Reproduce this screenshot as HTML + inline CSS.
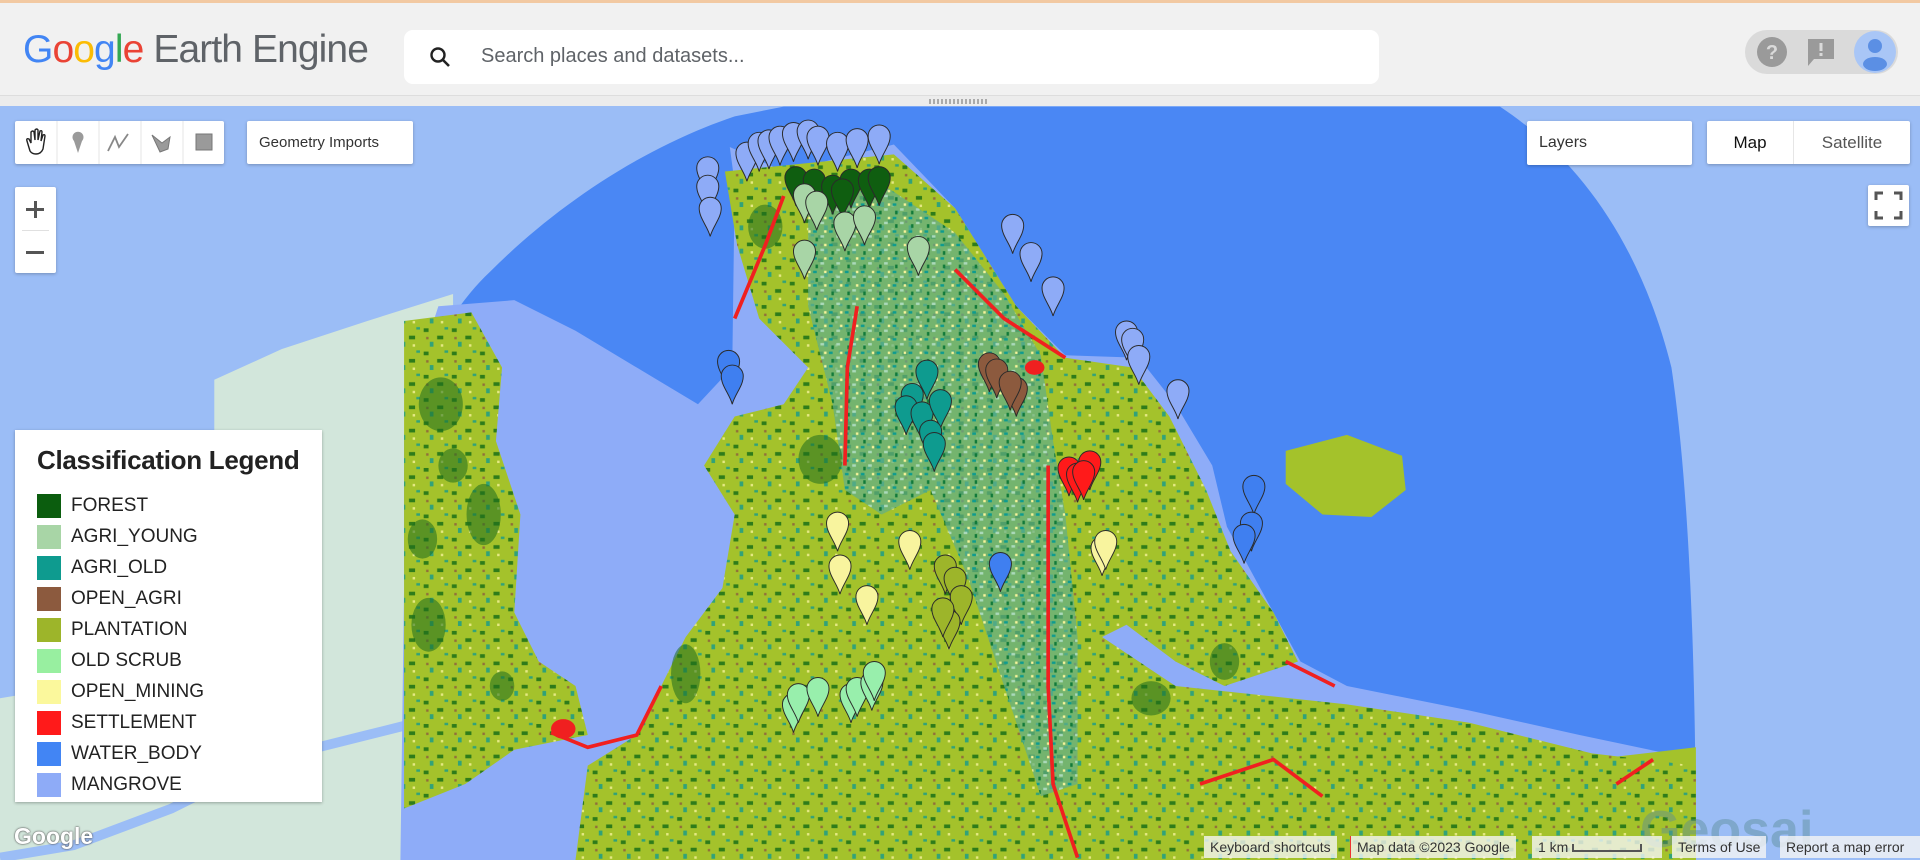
<!DOCTYPE html>
<html><head><meta charset="utf-8"><style>
*{margin:0;padding:0;box-sizing:border-box}
body{width:1920px;height:860px;overflow:hidden;font-family:"Liberation Sans",Arial,sans-serif;background:#9bbdf6;position:relative}
.hdr{position:absolute;left:0;top:0;width:1920px;height:95px;background:#f1f1f1;border-top:3px solid #f2c9a2}
.strip{position:absolute;left:0;top:95px;width:1920px;height:11px;background:#ececec;border-top:1px solid #ddd}
.logo{position:absolute;left:23px;top:25px;font-size:39px;letter-spacing:-0.9px;color:#5f6368;white-space:nowrap}
.search{position:absolute;left:404px;top:27px;width:975px;height:54px;background:#fff;border-radius:9px}
.search span{position:absolute;left:77px;top:15px;font-size:20px;color:#5f6368}
.pill{position:absolute;left:1745px;top:27px;width:153px;height:44px;border-radius:22px;background:#dadada}
.box{position:absolute;background:#fff;border-radius:2px;box-shadow:0 1px 3px rgba(0,0,0,.25)}
.lbl{font-size:16px;color:#333}
.legend{position:absolute;left:15px;top:430px;width:307px;height:372px;background:#fff;box-shadow:0 1px 3px rgba(0,0,0,.3)}
.legend h3{position:absolute;left:22px;top:15px;font-size:26px;font-weight:bold;color:#222;letter-spacing:-0.3px}
.row{position:absolute;left:22px;height:24px;font-size:19px;color:#222;line-height:24px}
.row i{display:inline-block;width:24px;height:24px;vertical-align:top;margin-right:10px}
.foot{position:absolute;top:836px;height:22px;background:rgba(245,245,245,.8);font-size:14px;color:#333;line-height:22px;padding:0 6px}
</style></head><body>
<div class="hdr">
 <div class="logo"><span style="color:#4285f4">G</span><span style="color:#ea4335">o</span><span style="color:#fbbc05">o</span><span style="color:#4285f4">g</span><span style="color:#34a853">l</span><span style="color:#ea4335">e</span> Earth Engine</div>
 <div class="search"><svg style="position:absolute;left:24px;top:15px" width="24" height="24" viewBox="0 0 24 24"><circle cx="10" cy="10" r="6.5" fill="none" stroke="#222" stroke-width="2.4"/><path d="M14.5 14.5L21 21" stroke="#222" stroke-width="2.6"/></svg><span>Search places and datasets...</span></div>
 <div class="pill">
  <svg style="position:absolute;left:12px;top:7px" width="30" height="30" viewBox="0 0 30 30"><circle cx="15" cy="15" r="15" fill="#9a9a9a"/><text x="15" y="22" font-size="20" font-weight="bold" fill="#dadada" text-anchor="middle" font-family="Liberation Sans">?</text></svg>
  <svg style="position:absolute;left:61px;top:7px" width="30" height="30" viewBox="0 0 30 30"><path d="M2 2H28V22H8L2 29Z" fill="#9a9a9a"/><rect x="13.5" y="6" width="3" height="8" fill="#dadada"/><rect x="13.5" y="16" width="3" height="3" fill="#dadada"/></svg>
  <svg style="position:absolute;left:109px;top:1px" width="42" height="42" viewBox="0 0 42 42"><circle cx="21" cy="21" r="21" fill="#a9c6f6"/><circle cx="21" cy="15" r="7" fill="#5b8fe4"/><ellipse cx="21" cy="33" rx="12" ry="7" fill="#5b8fe4"/></svg>
 </div>
</div>
<div class="strip"><div style="position:absolute;left:929px;top:3px;width:60px;height:5px;background:repeating-linear-gradient(90deg,#aaa 0 2px,transparent 2px 4px)"></div></div>

<svg style="position:absolute;left:0;top:0" width="1920" height="860" viewBox="0 0 1568 702" preserveAspectRatio="none">
<defs>
<path id="pin" d="M9,32 C7,24 0,17 0,9 A9,9 0 0 1 18,9 C18,17 11,24 9,32 Z" stroke="#2a2a2a" stroke-width="0.8"/>
<pattern id="tex" width="23" height="19" patternUnits="userSpaceOnUse">
<rect x="1" y="2" width="4" height="3" fill="#116a16"/><rect x="12" y="8" width="5" height="3" fill="#116a16"/><rect x="6" y="13" width="3" height="4" fill="#149a8c"/><rect x="18" y="1" width="3" height="2" fill="#149a8c"/><rect x="15" y="15" width="2" height="2" fill="#f6f39a"/><rect x="3" y="9" width="2" height="2" fill="#8c5a3e"/>
</pattern>
<pattern id="tex2" width="13" height="11" patternUnits="userSpaceOnUse">
<rect x="1" y="1" width="3" height="2" fill="#0e9b8f"/><rect x="7" y="5" width="3" height="2" fill="#aad9ba"/><rect x="3" y="7" width="2" height="3" fill="#117a3a"/><rect x="10" y="1" width="2" height="2" fill="#f6f39a"/>
</pattern>
</defs>
<rect x="0" y="87" width="1568" height="615" fill="#9bbdf6"/>
<path d="M175,310 L230,285 L300,262 L370,240 L370,702 L0,702 L0,570 L60,560 L130,555 L175,520 Z" fill="#d2e6db"/>
<path d="M0,700 L60,690 L140,660 L220,620 L300,600 L340,590" fill="none" stroke="#9bbdf6" stroke-width="8"/>
<path d="M330,360 C340,300 370,250 400,222 C450,172 520,122 600,95 L640,87 L1225,87 C1290,130 1340,200 1365,300 C1380,400 1385,550 1385,702 L330,702 Z" fill="#4a87f4"/>
<path d="M327,702 L332,330 L358,250 L420,245 L470,270 L520,300 L570,330 L598,300 L600,150 L596,120 L640,140 L730,118 L780,170 L830,250 L870,290 L930,292 L960,330 L990,380 L1002,430 L1040,500 L1062,540 L1100,560 L1200,580 L1290,600 L1385,620 L1385,702 Z" fill="#8eacf8"/>
<g id="land" fill="#a4c22b">
<path d="M330,262 L385,255 L410,300 L405,360 L425,420 L420,500 L440,540 L470,560 L480,600 L420,612 L380,640 L330,660 Z"/>
<path d="M592,140 L730,126 L780,170 L830,250 L870,292 L925,300 L955,340 L985,400 L1005,450 L1040,500 L1060,540 L1000,560 L960,540 L920,510 L900,520 L960,560 L1100,575 L1200,590 L1300,615 L1385,625 L1385,702 L470,702 L480,625 L520,600 L540,560 L560,520 L590,480 L600,420 L575,380 L600,340 L640,330 L660,300 L620,260 L602,200 Z"/>
<path d="M1050,368 L1100,355 L1145,372 L1148,400 L1120,422 L1080,420 L1050,395 Z"/>
<path d="M1300,620 L1385,610 L1385,702 L1310,702 Z"/>
</g>
<g fill="url(#tex)" opacity="0.8">
<path d="M330,262 L385,255 L410,300 L405,360 L425,420 L420,500 L440,540 L470,560 L480,600 L420,612 L380,640 L330,660 Z"/>
<path d="M592,140 L730,126 L780,170 L830,250 L870,292 L925,300 L955,340 L985,400 L1005,450 L1040,500 L1060,540 L1000,560 L960,540 L920,510 L900,520 L960,560 L1100,575 L1200,590 L1300,615 L1385,625 L1385,702 L470,702 L480,625 L520,600 L540,560 L560,520 L590,480 L600,420 L575,380 L600,340 L640,330 L660,300 L620,260 L602,200 Z"/>
</g>
<path d="M660,170 L720,150 L780,190 L820,240 L850,290 L860,360 L870,420 L880,520 L880,640 L850,650 L820,560 L790,470 L760,400 L720,420 L690,400 L680,330 L660,250 Z" fill="#5fae8c" opacity="0.7"/>
<path d="M660,170 L720,150 L780,190 L820,240 L850,290 L860,360 L870,420 L880,520 L880,640 L850,650 L820,560 L790,470 L760,400 L720,420 L690,400 L680,330 L660,250 Z" fill="url(#tex2)"/>
<g fill="#1f6e1f" opacity="0.55">
<ellipse cx="360" cy="330" rx="18" ry="22"/><ellipse cx="395" cy="420" rx="14" ry="25"/><ellipse cx="350" cy="510" rx="14" ry="22"/>
<ellipse cx="370" cy="380" rx="12" ry="14"/><ellipse cx="560" cy="550" rx="12" ry="24"/><ellipse cx="670" cy="375" rx="18" ry="20"/>
<ellipse cx="625" cy="185" rx="14" ry="18"/><ellipse cx="1000" cy="540" rx="12" ry="15"/><ellipse cx="345" cy="440" rx="12" ry="16"/>
<ellipse cx="940" cy="570" rx="16" ry="14"/><ellipse cx="410" cy="560" rx="10" ry="12"/>
</g>
<g fill="none" stroke="#f02020" stroke-width="3">
<path d="M600,260 L625,200 L640,160"/><path d="M700,250 L692,300 L690,380"/><path d="M780,220 L820,260 L870,292"/>
<path d="M856,380 L856,560 L860,640 L880,700"/><path d="M450,598 L480,610 L520,600 L540,560"/>
<path d="M980,640 L1040,620 L1080,650"/><path d="M1050,540 L1090,560"/><path d="M1320,640 L1350,620"/>
</g>
<g fill="#f02020"><ellipse cx="460" cy="595" rx="10" ry="8"/><ellipse cx="845" cy="300" rx="8" ry="6"/></g>
<g>
<g fill="#8eabf7">
<use href="#pin" x="601" y="116"/><use href="#pin" x="611" y="108"/><use href="#pin" x="619" y="106"/><use href="#pin" x="628" y="103"/><use href="#pin" x="639" y="100"/><use href="#pin" x="651" y="98"/><use href="#pin" x="659" y="103"/><use href="#pin" x="675" y="108"/><use href="#pin" x="691" y="105"/><use href="#pin" x="709" y="102"/>
<use href="#pin" x="569" y="128"/><use href="#pin" x="569" y="143"/><use href="#pin" x="571" y="161"/>
<use href="#pin" x="818" y="175"/><use href="#pin" x="833" y="198"/><use href="#pin" x="851" y="226"/><use href="#pin" x="911" y="262"/><use href="#pin" x="916" y="268"/><use href="#pin" x="921" y="282"/><use href="#pin" x="953" y="310"/>
</g>
<g fill="#3f7ff0"><use href="#pin" x="586" y="286"/><use href="#pin" x="589" y="298"/><use href="#pin" x="808" y="451"/><use href="#pin" x="1015" y="388"/><use href="#pin" x="1013" y="418"/><use href="#pin" x="1007" y="428"/></g>
<g fill="#0f5e10"><use href="#pin" x="641" y="136"/><use href="#pin" x="656" y="138"/><use href="#pin" x="671" y="143"/><use href="#pin" x="686" y="138"/><use href="#pin" x="701" y="138"/><use href="#pin" x="709" y="136"/><use href="#pin" x="679" y="146"/></g>
<g fill="#a8d5a6"><use href="#pin" x="648" y="150"/><use href="#pin" x="658" y="156"/><use href="#pin" x="681" y="173"/><use href="#pin" x="697" y="168"/><use href="#pin" x="648" y="196"/><use href="#pin" x="741" y="193"/></g>
<g fill="#0e9b8f"><use href="#pin" x="748" y="294"/><use href="#pin" x="736" y="313"/><use href="#pin" x="731" y="323"/><use href="#pin" x="744" y="328"/><use href="#pin" x="759" y="318"/><use href="#pin" x="751" y="343"/><use href="#pin" x="754" y="353"/></g>
<g fill="#8c5a3e"><use href="#pin" x="799" y="288"/><use href="#pin" x="805" y="293"/><use href="#pin" x="821" y="308"/><use href="#pin" x="816" y="303"/></g>
<g fill="#ff1a1a"><use href="#pin" x="864" y="373"/><use href="#pin" x="871" y="378"/><use href="#pin" x="881" y="368"/><use href="#pin" x="876" y="376"/></g>
<g fill="#f8f49e"><use href="#pin" x="675" y="418"/><use href="#pin" x="677" y="453"/><use href="#pin" x="734" y="433"/><use href="#pin" x="699" y="478"/><use href="#pin" x="891" y="438"/><use href="#pin" x="894" y="433"/></g>
<g fill="#9db52a"><use href="#pin" x="763" y="453"/><use href="#pin" x="771" y="463"/><use href="#pin" x="776" y="478"/><use href="#pin" x="766" y="498"/><use href="#pin" x="761" y="488"/></g>
<g fill="#98efac"><use href="#pin" x="639" y="566"/><use href="#pin" x="643" y="558"/><use href="#pin" x="659" y="553"/><use href="#pin" x="686" y="558"/><use href="#pin" x="691" y="553"/><use href="#pin" x="703" y="548"/><use href="#pin" x="705" y="540"/></g>
</g>
</svg>

<div class="box" style="left:15px;top:121px;width:209px;height:43px"></div>
<svg style="position:absolute;left:15px;top:121px" width="209" height="43" viewBox="0 0 209 43">
<g stroke="#e6e6e6"><path d="M42 0V43M84 0V43M126 0V43M168 0V43"/></g>
<path d="M15 30 L12 20 Q11 17 14 18 L16 22 L16 11 Q18 9 19 11 L20 19 L20 9 Q22 7 23 9 L23 19 L25 10 Q27 9 27 11 L26 20 L28 14 Q30 13 30 15 L28 28 Q26 33 21 33 Q17 33 15 30Z" fill="none" stroke="#222" stroke-width="1.4"/>
<path d="M63 32 L59 20 A5.5 5.5 0 1 1 67 20 Z" fill="#9a9a9a"/>
<path d="M93 30 L100 16 L104 26 L113 13" fill="none" stroke="#888" stroke-width="1.8"/>
<path d="M137 14 L147 22 L155 16 L153 28 L145 31 Z" fill="#9a9a9a" stroke="#777"/>
<rect x="181" y="13" width="16" height="16" fill="#9a9a9a" stroke="#777"/>
</svg>
<div class="box lbl" style="left:247px;top:121px;width:166px;height:43px;line-height:43px;padding-left:12px;font-size:15px">Geometry Imports</div>
<div class="box" style="left:15px;top:187px;width:41px;height:86px">
 <div style="position:absolute;left:11px;top:21px;width:18px;height:3px;background:#555"></div><div style="position:absolute;left:18.5px;top:14px;width:3px;height:17px;background:#555"></div>
 <div style="position:absolute;left:7px;top:43px;width:27px;height:1px;background:#e0e0e0"></div>
 <div style="position:absolute;left:11px;top:64px;width:18px;height:3px;background:#555"></div>
</div>
<div class="box lbl" style="left:1527px;top:121px;width:165px;height:44px;line-height:44px;padding-left:12px">Layers</div>
<div class="box" style="left:1707px;top:121px;width:203px;height:43px;font-size:17px;line-height:43px">
 <span style="position:absolute;left:0;width:86px;text-align:center;color:#111">Map</span>
 <div style="position:absolute;left:86px;top:0;width:1px;height:43px;background:#e6e6e6"></div>
 <span style="position:absolute;left:87px;width:116px;text-align:center;color:#555">Satellite</span>
</div>
<div class="box" style="left:1868px;top:185px;width:41px;height:41px">
<svg width="41" height="41" viewBox="0 0 41 41"><path d="M8 15V8H15M26 8H33V15M33 26V33H26M15 33H8V26" fill="none" stroke="#555" stroke-width="3"/></svg>
</div>

<div class="legend">
 <h3>Classification Legend</h3>
 <div class="row" style="top:64px"><i style="background:#0b5d0e"></i>FOREST</div>
 <div class="row" style="top:95px"><i style="background:#a8d5a6"></i>AGRI_YOUNG</div>
 <div class="row" style="top:126px"><i style="background:#0e9b8f"></i>AGRI_OLD</div>
 <div class="row" style="top:157px"><i style="background:#8c5a3e"></i>OPEN_AGRI</div>
 <div class="row" style="top:188px"><i style="background:#9db52a"></i>PLANTATION</div>
 <div class="row" style="top:219px"><i style="background:#98efa0"></i>OLD SCRUB</div>
 <div class="row" style="top:250px"><i style="background:#fbf89c"></i>OPEN_MINING</div>
 <div class="row" style="top:281px"><i style="background:#ff1a1a"></i>SETTLEMENT</div>
 <div class="row" style="top:312px"><i style="background:#4285f4"></i>WATER_BODY</div>
 <div class="row" style="top:343px"><i style="background:#8eabf7"></i>MANGROVE</div>
</div>

<div style="position:absolute;left:14px;top:823px;font-size:23px;color:#fff;font-weight:bold;text-shadow:0 0 2px #555,0 0 1px #555">Google</div>
<div style="position:absolute;left:1640px;top:800px;font-size:52px;font-weight:bold;color:rgba(90,140,150,.45)">Geosai</div>
<div class="foot" style="left:1204px">Keyboard shortcuts</div>
<div class="foot" style="left:1350px;border-left:1px solid #e33">Map data ©2023 Google</div>
<div class="foot" style="left:1532px;width:130px">1 km <span style="display:inline-block;width:70px;height:8px;border:2px solid #555;border-top:none;vertical-align:middle"></span></div>
<div class="foot" style="left:1672px">Terms of Use</div>
<div class="foot" style="left:1780px;width:140px;white-space:nowrap;overflow:hidden">Report a map error</div>
</body></html>
